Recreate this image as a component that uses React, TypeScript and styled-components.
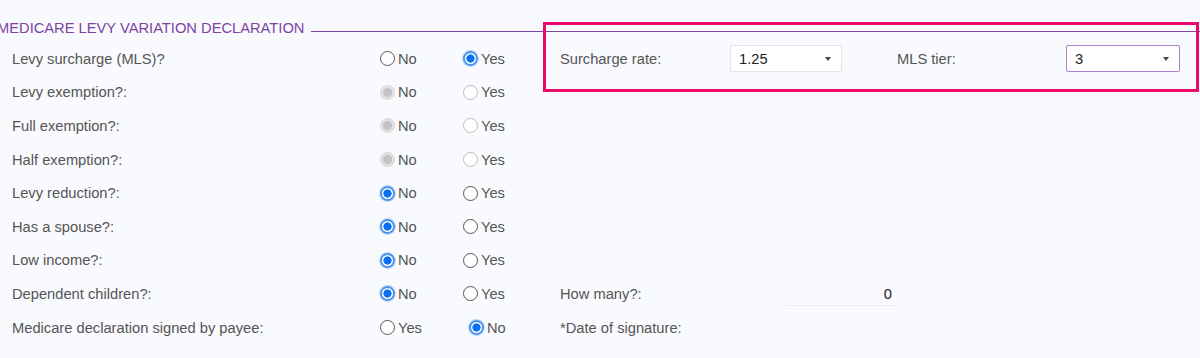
import React from "react";
import styled, { createGlobalStyle, css } from "styled-components";

const GlobalStyle = createGlobalStyle`
  html, body {
    margin: 0;
    padding: 0;
    background: #f9fafd;
    font-family: "Liberation Sans", Arial, sans-serif;
    overflow: hidden;
  }
`;

const Page = styled.div`
  position: relative;
  width: 1200px;
  height: 358px;
  padding-top: 18px;
  box-sizing: border-box;
`;

const SectionHeader = styled.div`
  display: flex;
  align-items: center;
  margin-left: -3px;
  height: 20px;
`;

const SectionTitle = styled.span`
  font-size: 14.7px;
  color: #7d43a3;
  text-transform: uppercase;
  white-space: nowrap;
`;

const SectionLine = styled.div`
  flex: 1;
  height: 1.5px;
  background: #7d43a3;
  margin: 7px 0 0 7px;
`;

const Rows = styled.div`
  display: flex;
  flex-direction: column;
  margin-top: 4px;
`;

const Row = styled.div`
  display: grid;
  grid-template-columns: 380px 83px 97px 1fr;
  align-items: center;
  height: 33.6px;
`;

const Label = styled.span<{ $indent?: number }>`
  padding-left: ${(p) => p.$indent ?? 12}px;
  font-size: 14.7px;
  color: #555;
  white-space: nowrap;
`;

const Option = styled.label<{ $shift?: number }>`
  display: flex;
  align-items: center;
  gap: 3px;
  margin-left: ${(p) => p.$shift ?? 0}px;
  font-size: 14.7px;
  color: #555;
`;

const Radio = styled.span<{ $checked?: boolean; $disabled?: boolean }>`
  width: 15px;
  height: 15px;
  border-radius: 50%;
  box-sizing: border-box;
  background: #fff;
  border: 1.2px solid #555;
  ${(p) =>
    p.$disabled &&
    !p.$checked &&
    css`
      border-color: #bdbdbd;
    `}
  ${(p) =>
    p.$checked &&
    !p.$disabled &&
    css`
      border: 2px solid #4c93f0;
      background: radial-gradient(circle, #0a6ff0 0 3.8px, #fff 4.4px);
      box-shadow: 0 0 0 1px rgba(76, 147, 240, 0.35);
    `}
  ${(p) =>
    p.$checked &&
    p.$disabled &&
    css`
      border: 1.5px solid #d8d8d8;
      background: radial-gradient(circle, #c3c3c3 0 4.2px, #e2e2e2 4.8px);
    `}
`;

const RightCell = styled.div`
  display: flex;
  align-items: center;
`;

const RightGroup = styled.div`
  display: grid;
  grid-template-columns: 170px 112px 55px 169px 114px;
  align-items: center;
`;

const Select = styled.div<{ $active?: boolean }>`
  display: flex;
  align-items: center;
  justify-content: space-between;
  height: 27px;
  box-sizing: border-box;
  padding: 0 10px 0 8px;
  background: #fff;
  border: 1px solid #e3e5ea;
  font-size: 14.7px;
  color: #222;
  ${(p) =>
    p.$active &&
    css`
      border: 1.5px solid #b17ed0;
      border-radius: 2px;
    `}
`;

const Caret = styled.span`
  width: 0;
  height: 0;
  border-left: 3.5px solid transparent;
  border-right: 3.5px solid transparent;
  border-top: 4px solid #444;
`;

const NumberInput = styled.div`
  width: 113px;
  height: 24px;
  box-sizing: border-box;
  padding: 4px 6px 0 0;
  margin-left: 57px;
  text-align: right;
  font-size: 14.7px;
  color: #222;
  border-bottom: 1px solid #eceef2;
`;

const Highlight = styled.div`
  position: absolute;
  left: 543px;
  top: 22px;
  width: 656px;
  height: 70px;
  box-sizing: border-box;
  border: 3px solid #ea0a6f;
  pointer-events: none;
`;

type YesNo = {
  label: string;
  value: "yes" | "no";
  disabled?: boolean;
};

const rows: YesNo[] = [
  { label: "Levy surcharge (MLS)?", value: "yes" },
  { label: "Levy exemption?:", value: "no", disabled: true },
  { label: "Full exemption?:", value: "no", disabled: true },
  { label: "Half exemption?:", value: "no", disabled: true },
  { label: "Levy reduction?:", value: "no" },
  { label: "Has a spouse?:", value: "no" },
  { label: "Low income?:", value: "no" },
  { label: "Dependent children?:", value: "no" },
];

const App: React.FC = () => {
  return (
    <Page>
      <GlobalStyle />
      <SectionHeader>
        <SectionTitle>Medicare levy variation declaration</SectionTitle>
        <SectionLine />
      </SectionHeader>
      <Rows>
        {rows.map((r, i) => (
          <Row key={r.label}>
            <Label>{r.label}</Label>
            <Option>
              <Radio $checked={r.value === "no"} $disabled={r.disabled} />
              No
            </Option>
            <Option>
              <Radio $checked={r.value === "yes"} $disabled={r.disabled} />
              Yes
            </Option>
            {i === 0 && (
              <RightGroup>
                <Label $indent={0}>Surcharge rate:</Label>
                <Select>
                  1.25
                  <Caret />
                </Select>
                <span />
                <Label $indent={0}>MLS tier:</Label>
                <Select $active>
                  3
                  <Caret />
                </Select>
              </RightGroup>
            )}
            {i === 7 && (
              <RightCell>
                <Label $indent={0} style={{ width: 168 }}>
                  How many?:
                </Label>
                <NumberInput>0</NumberInput>
              </RightCell>
            )}
          </Row>
        ))}
        <Row>
          <Label>Medicare declaration signed by payee:</Label>
          <Option>
            <Radio />
            Yes
          </Option>
          <Option $shift={6}>
            <Radio $checked />
            No
          </Option>
          <RightCell>
            <Label $indent={0}>*Date of signature:</Label>
          </RightCell>
        </Row>
      </Rows>
      <Highlight />
    </Page>
  );
};

export default App;
